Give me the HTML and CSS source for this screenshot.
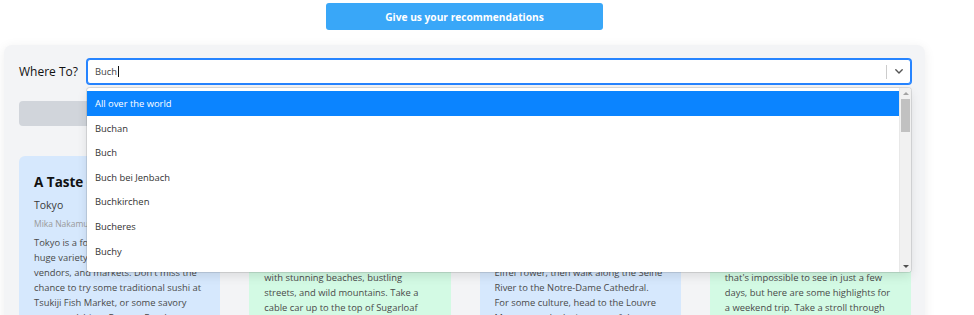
FILE: index.html
```html
<!DOCTYPE html>
<html lang="en">
<head>
    <meta charset="UTF-8">
    <meta name="viewport" content="width=device-width, initial-scale=1.0">
    <title>Travel Recommendations</title>
    <link rel="stylesheet" href="styles.css">
</head>
<body>
    <div class="page">
        <div class="top">
            <button class="cta">Give us your recommendations</button>
        </div>

        <section class="panel">
            <div class="where">
                <label class="where-label">Where To?</label>
                <div class="select">
                    <div class="control">
                        <div class="value">Buch<span class="caret"></span></div>
                        <div class="indicators">
                            <span class="sep"></span>
                            <svg class="chevron" width="8" height="5" viewBox="0 0 8 5">
                                <path d="M0.8 0.8 L4 4 L7.2 0.8" fill="none" stroke="#555" stroke-width="1.4" stroke-linecap="round" stroke-linejoin="round"/>
                            </svg>
                        </div>
                    </div>

                    <div class="menu">
                        <div class="menu-list">
                            <div class="option active">All over the world</div>
                            <div class="option">Buchan</div>
                            <div class="option">Buch</div>
                            <div class="option">Buch bei Jenbach</div>
                            <div class="option">Buchkirchen</div>
                            <div class="option">Bucheres</div>
                            <div class="option">Buchy</div>
                        </div>
                        <div class="scrollbar">
                            <span class="arrow up"></span>
                            <div class="track"><span class="thumb"></span></div>
                            <span class="arrow down"></span>
                        </div>
                    </div>
                </div>
            </div>

            <button class="search">Search</button>

            <div class="cards">
                <div class="card blue">
                    <h3>A Taste of Tokyo</h3>
                    <p class="city">Tokyo</p>
                    <p class="author">Mika Nakamura</p>
                    <p class="text">Tokyo is a food lover's paradise, with a<br>huge variety of restaurants, street food<br>vendors, and markets. Don't miss the<br>chance to try some traditional sushi at<br>Tsukiji Fish Market, or some savory<br>ramen at Ichiran Ramen. For dessert,</p>
                </div>
                <div class="card green">
                    <h3>Rio Adventures</h3>
                    <p class="city">Rio de Janeiro</p>
                    <p class="author">Lucas Oliveira</p>
                    <p class="text">Rio de Janeiro is a city of contrasts,<br>a lively and colourful place packed<br>with stunning beaches, bustling<br>streets, and wild mountains. Take a<br>cable car up to the top of Sugarloaf<br>Mountain for breathtaking views.</p>
                </div>
                <div class="card blue">
                    <h3>Paris in a Day</h3>
                    <p class="city">Paris</p>
                    <p class="author">Claire Dubois</p>
                    <p class="text">Start your morning with a croissant<br>and a coffee, then head up the<br>Eiffel Tower, then walk along the Seine<br>River to the Notre-Dame Cathedral.<br>For some culture, head to the Louvre<br>Museum and take in some of the</p>
                </div>
                <div class="card green">
                    <h3>New York Weekend</h3>
                    <p class="city">New York</p>
                    <p class="author">Jake Miller</p>
                    <p class="text">New York is a huge city with so<br>much going on, so much of it<br>that's impossible to see in just a few<br>days, but here are some highlights for<br>a weekend trip. Take a stroll through<br>Central Park and visit the museums.</p>
                </div>
            </div>
        </section>
    </div>
</body>
</html>
```

FILE: styles.css
```css
body {
    margin: 0;
    font-family: 'Open Sans', 'Noto Sans', sans-serif;
    background: #fff;
    color: #333;
}
.page {
    width: 921px;
    margin-left: 4px;
    padding-top: 3px;
}
.top {
    display: flex;
    justify-content: center;
}
.cta {
    width: 277px;
    height: 27px;
    border: none;
    border-radius: 3px;
    background: #39a7f8;
    color: #fff;
    font-family: inherit;
    font-size: 10.2px;
    font-weight: 700;
    cursor: pointer;
}
.panel {
    margin-top: 15px;
    padding: 14px 14px 15px 15px;
    background: #f3f4f6;
    border-radius: 8px;
    box-shadow: 0 2px 12px rgba(0, 0, 0, 0.07);
}
.where {
    display: flex;
    align-items: center;
    gap: 9px;
}
.where-label {
    font-size: 12px;
    font-weight: 500;
    color: #111;
    white-space: nowrap;
}
.select {
    position: relative;
    flex: 1;
}
.control {
    height: 23px;
    display: flex;
    align-items: center;
    background: #fff;
    border: 1px solid #2684ff;
    box-shadow: 0 0 0 1px #2684ff;
    border-radius: 3px;
}
.value {
    flex: 1;
    padding-left: 7px;
    font-size: 9.4px;
    color: #444;
    display: flex;
    align-items: center;
}
.caret {
    display: inline-block;
    width: 1px;
    height: 11px;
    background: #111;
    margin-left: 1px;
}
.indicators {
    display: flex;
    align-items: center;
    height: 100%;
}
.sep {
    width: 1px;
    height: 14px;
    background: #ccc;
}
.chevron {
    margin: 0 7px 0 8px;
}
.menu {
    position: absolute;
    top: 29px;
    left: 0;
    right: 0;
    height: 184px;
    display: flex;
    background: #fff;
    border-radius: 3px;
    box-shadow: 0 0 0 1px rgba(0, 0, 0, 0.1), 0 4px 11px rgba(0, 0, 0, 0.1);
    overflow: hidden;
    z-index: 10;
}
.menu-list {
    flex: 1;
    padding-top: 3px;
}
.option {
    height: 24.6px;
    line-height: 25px;
    padding-left: 8px;
    font-size: 9.4px;
    color: #333;
}
.option.active {
    background: #0b84ff;
    color: #fff;
}
.scrollbar {
    width: 11px;
    display: flex;
    flex-direction: column;
    background: #f1f1f1;
    border-left: 1px solid #e8e8e8;
}
.arrow {
    height: 11px;
    display: flex;
    align-items: center;
    justify-content: center;
}
.arrow::before {
    content: "";
    border-left: 3px solid transparent;
    border-right: 3px solid transparent;
}
.arrow.up::before {
    border-bottom: 3px solid #a3a3a3;
}
.arrow.down::before {
    border-top: 3px solid #505050;
}
.track {
    flex: 1;
    padding: 0 1px;
}
.thumb {
    display: block;
    height: 33px;
    background: #c1c1c1;
}
.search {
    display: block;
    width: 100%;
    height: 25px;
    margin-top: 17px;
    border: none;
    border-radius: 4px;
    background: #d1d5db;
    color: #fff;
    font-family: inherit;
    font-size: 10px;
    font-weight: 700;
}
.cards {
    margin-top: 30px;
    display: grid;
    grid-template-columns: repeat(4, 1fr);
    gap: 29px;
}
.card {
    border-radius: 6px;
    padding: 17px 15px 15px;
    height: 300px;
}
.card.blue {
    background: #d6e8fd;
}
.card.green {
    background: #d3fae4;
}
.card h3 {
    margin: 0;
    font-size: 13.5px;
    font-weight: 700;
    color: #111;
    line-height: 18px;
}
.card .city {
    margin: 7px 0 0;
    font-size: 10.5px;
    font-weight: 500;
    color: #3a3a3a;
    line-height: 14px;
}
.card .author {
    margin: 6px 0 0;
    font-size: 8.5px;
    color: #9a9a9a;
    line-height: 12px;
}
.card .text {
    margin: 5px 0 0;
    font-size: 9.4px;
    line-height: 15px;
    color: #4a4a4a;
    white-space: nowrap;
}
.card.green .text {
    margin-top: 10px;
}
```
